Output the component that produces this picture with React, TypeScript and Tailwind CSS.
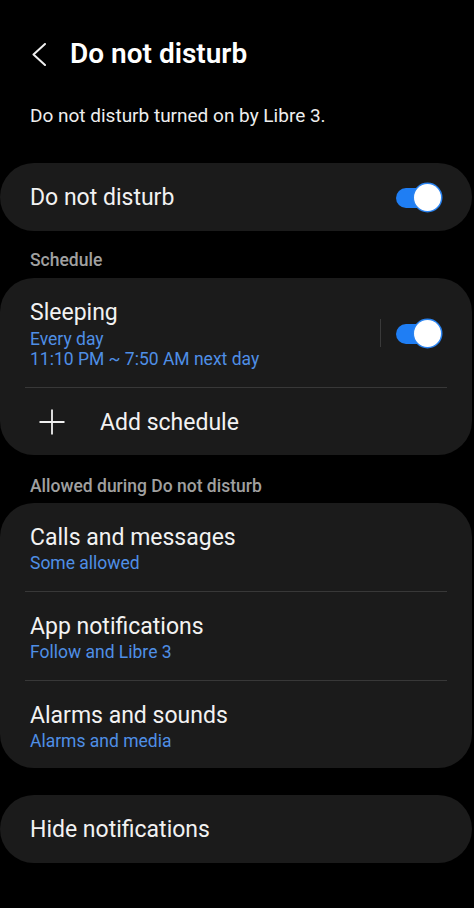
import React from "react";

const Toggle = () => (
  <div className="relative h-[27px] w-[45px] shrink-0">
    <div className="absolute left-0 top-[4px] h-[20px] w-[40px] rounded-full bg-[#1f7ef4]" />
    <div className="absolute right-0 top-0 h-[27px] w-[27px] rounded-full bg-white ring-[1.5px] ring-[#2a83f0]" />
  </div>
);

const Row = ({ title, sub, h }: { title: string; sub: string; h: string }) => (
  <div className={`flex flex-col pl-[30px] pt-[21px] ${h}`}>
    <div className="text-[23px] leading-[28px] text-[#f2f2f2]">{title}</div>
    <div className="mt-[0px] text-[17.5px] leading-[22px] text-[#4f8fe6]">{sub}</div>
  </div>
);

export default function App() {
  return (
    <div
      className="min-h-[908px] w-full bg-black pb-[40px] pt-[27px]"
      style={{ fontFamily: "Roboto, 'Noto Sans', sans-serif" }}
    >
      <div className="flex h-[54px] items-center">
        <svg className="ml-[32px]" width="14" height="23" viewBox="0 0 14 23" fill="none">
          <polyline points="13,1 1.5,11.5 13,22" stroke="#f0f0f0" strokeWidth="2" strokeLinecap="round" strokeLinejoin="round" />
        </svg>
        <div className="ml-[24px] text-[28px] font-semibold leading-[34px] text-white">Do not disturb</div>
      </div>

      <div className="mt-[23px] pl-[30px] text-[19px] leading-[24px] text-[#eeeeee]">
        Do not disturb turned on by Libre 3.
      </div>

      <div className="mr-[2px] mt-[35px] flex h-[68px] items-center justify-between rounded-[34px] bg-[#1b1b1b] pl-[30px] pr-[31px]">
        <div className="pt-[2px] text-[23px] leading-[28px] text-[#f2f2f2]">Do not disturb</div>
        <Toggle />
      </div>

      <div className="mt-[19px] pl-[30px] text-[17.5px] font-medium leading-[20px] text-[#a0a0a0]">Schedule</div>

      <div className="mr-[2px] mt-[8px] rounded-[34px] bg-[#1b1b1b]">
        <div className="flex h-[109px] items-start justify-between pr-[31px]">
          <div className="flex flex-col pl-[30px] pt-[21px]">
            <div className="text-[23px] leading-[28px] text-[#f2f2f2]">Sleeping</div>
            <div className="mt-[2px] text-[17.5px] leading-[20px] text-[#4f8fe6]">Every day</div>
            <div className="text-[17.5px] leading-[20px] text-[#4f8fe6]">11:10 PM ~ 7:50 AM next day</div>
          </div>
          <div className="mt-[41px] flex items-center">
            <div className="h-[28px] w-[1px] bg-[#3a3a3a]" />
            <div className="ml-[15px]">
              <Toggle />
            </div>
          </div>
        </div>
        <div className="mx-[25px] h-[1px] bg-[#383838]" />
        <div className="flex h-[67px] items-center">
          <svg className="ml-[39px]" width="26" height="26" viewBox="0 0 26 26" fill="none">
            <path d="M13 0.5V25.5M0.5 13H25.5" stroke="#f0f0f0" strokeWidth="1.8" />
          </svg>
          <div className="ml-[35px] pt-[3px] text-[23px] leading-[28px] text-[#f2f2f2]">Add schedule</div>
        </div>
      </div>

      <div className="mt-[21px] pl-[30px] text-[17.5px] font-medium leading-[20px] text-[#a0a0a0]">
        Allowed during Do not disturb
      </div>

      <div className="mr-[2px] mt-[7px] rounded-[34px] bg-[#1b1b1b]">
        <Row title="Calls and messages" sub="Some allowed" h="h-[88px]" />
        <div className="mx-[25px] h-[1px] bg-[#383838]" />
        <Row title="App notifications" sub="Follow and Libre 3" h="h-[88px]" />
        <div className="mx-[25px] h-[1px] bg-[#383838]" />
        <Row title="Alarms and sounds" sub="Alarms and media" h="h-[87px]" />
      </div>

      <div className="mr-[2px] mt-[27px] flex h-[68px] items-center rounded-[34px] bg-[#1b1b1b] pl-[30px]">
        <div className="pt-[2px] text-[23px] leading-[28px] text-[#f2f2f2]">Hide notifications</div>
      </div>
    </div>
  );
}
